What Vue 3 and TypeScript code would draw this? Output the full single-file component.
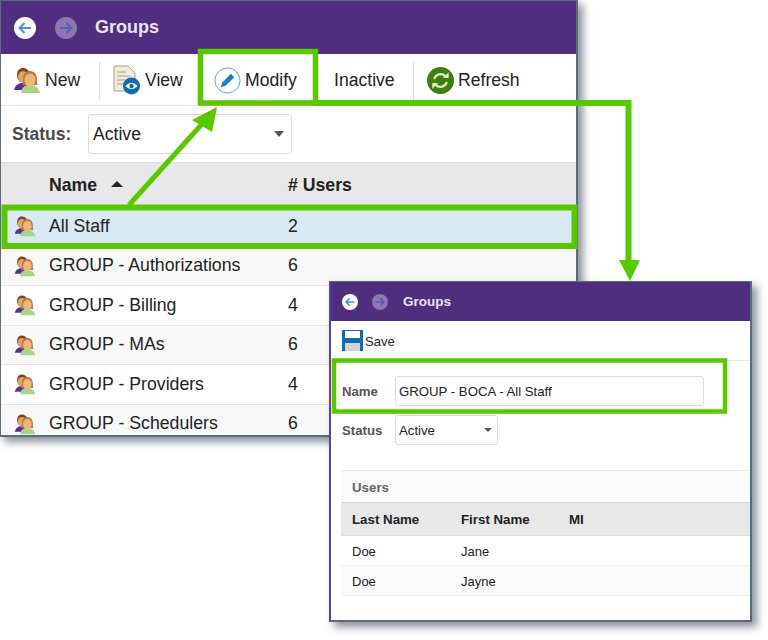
<template>
  <div class="canvas">
    <svg width="0" height="0" class="defs">
      <defs>
        <symbol id="people" viewBox="0 0 28 28">
          <path d="M1 24c1-5 5-7 8-7h5v7z" fill="#5b2d91" />
          <path d="M4 9c0-5 3-7 6-7 3 0 6 2 7 5l-3 9H8C5 15 4 12 4 9z" fill="#7a4425" />
          <ellipse cx="10" cy="11" rx="5" ry="6" fill="#e3a35c" />
          <path d="M8 27c0-5 4-8 7-8h3c4 0 8 3 9 8z" fill="#a5d58b" />
          <path d="M10 13c0-6 3-8 7-8s7 3 7 8c0 3 0 5 1 6H9c1-1 1-3 1-6z" fill="#b77a48" />
          <ellipse cx="17" cy="14" rx="5.5" ry="6.5" fill="#f0b678" />
        </symbol>
      </defs>
    </svg>

    <!-- list window -->
    <section class="win win-list">
      <header class="head head-lg">
        <span class="nav nav-back">
          <svg viewBox="0 0 22 22"><path d="M17 11H6M10.5 6 5.5 11l5 5" fill="none" stroke="#4a90d9" stroke-width="2" /></svg>
        </span>
        <span class="nav nav-next">
          <svg viewBox="0 0 22 22"><path d="M5 11h11M11.5 6l5 5-5 5" fill="none" stroke="#4f5fb5" stroke-width="2" /></svg>
        </span>
        <span class="title">Groups</span>
      </header>

      <div class="toolbar">
        <div class="tool tool-new">
          <svg class="tool-icon" width="28" height="28"><use href="#people" /></svg>New
        </div>
        <div class="tool tool-view">
          <svg class="tool-icon" width="28" height="30" viewBox="0 0 28 30">
            <path d="M1 1h14l7 7v18H1z" fill="#f1eadb" stroke="#a9a08e" />
            <path d="M4 7h9M4 11h13M4 15h9M4 19h8" stroke="#a9a08e" />
            <circle cx="18.500" cy="21" r="8.500" fill="#0f6cb0" />
            <path d="M12.500 21c3-4 9-4 12 0-3 4-9 4-12 0z" fill="#fff" />
            <circle cx="18.500" cy="21" r="2.200" fill="#0f6cb0" />
          </svg>View
        </div>
        <div class="tool tool-modify">
          <svg class="tool-icon" width="27" height="27" viewBox="0 0 28 28">
            <circle cx="14" cy="14" r="13" fill="#fff" stroke="#5ba3d8" />
            <path d="M7 21l1.500-5L17.500 7l3.500 3.500-9 9z" fill="#1a7fc4" />
          </svg>Modify
        </div>
        <div class="tool tool-inactive">Inactive</div>
        <div class="tool tool-refresh">
          <svg class="tool-icon" width="27" height="27" viewBox="0 0 28 28">
            <circle cx="14" cy="14" r="14" fill="#3f7f0c" />
            <path d="M7.500 12.500a6.800 6.800 0 0 1 11.500-3" fill="none" stroke="#dfe9d3" stroke-width="2.400" />
            <path d="M16.500 11.500h6v-6z" fill="#dfe9d3" />
            <path d="M20.500 15.500a6.800 6.800 0 0 1-11.500 3" fill="none" stroke="#dfe9d3" stroke-width="2.400" />
            <path d="M11.500 16.500h-6v6z" fill="#dfe9d3" />
          </svg>Refresh
        </div>
      </div>

      <div class="filter">
        <label class="filter-label">Status:</label>
        <div class="select select-lg">Active<span class="caret"></span></div>
      </div>

      <div class="list-head">
        <span class="col-name">Name<i class="sort"></i></span>
        <span class="col-users"># Users</span>
      </div>
      <div
        v-for="(g, i) in groups"
        :key="g.name"
        class="list-row"
        :class="{ selected: i === 0, odd: i % 2 === 1 && i !== 0 }"
      >
        <svg class="row-icon" width="22" height="22"><use href="#people" /></svg>
        <span class="col-name">{{ g.name }}</span>
        <span class="col-users">{{ g.users }}</span>
      </div>
    </section>

    <!-- edit window -->
    <section class="win win-edit">
      <header class="head head-sm">
        <span class="nav nav-back nav-sm">
          <svg viewBox="0 0 22 22"><path d="M17 11H6M10.500 6 5.500 11l5 5" fill="none" stroke="#4a90d9" stroke-width="2" /></svg>
        </span>
        <span class="nav nav-next nav-sm">
          <svg viewBox="0 0 22 22"><path d="M5 11h11M11.500 6l5 5-5 5" fill="none" stroke="#4f5fb5" stroke-width="2" /></svg>
        </span>
        <span class="title title-sm">Groups</span>
      </header>

      <div class="edit-bar">
        <svg width="21" height="21" viewBox="0 0 21 21">
          <rect width="21" height="21" fill="#0f6cb0" />
          <rect x="3" y="1" width="15" height="7" fill="#fff" />
          <rect x="3" y="13" width="15" height="8" fill="#d4d4d4" />
        </svg>
        <span class="save-label">Save</span>
      </div>

      <div class="form">
        <div class="form-row form-row-name">
          <label>Name</label>
          <div class="text-input">GROUP - BOCA - All Staff</div>
        </div>
        <div class="form-row form-row-status">
          <label>Status</label>
          <div class="select select-sm">Active<span class="caret caret-sm"></span></div>
        </div>
      </div>

      <div class="users">
        <div class="users-title">Users</div>
        <div class="users-head">
          <span class="c-last">Last Name</span><span class="c-first">First Name</span><span>MI</span>
        </div>
        <div v-for="(u, i) in users" :key="u" class="users-row" :class="{ odd: i === 1 }">
          <span class="c-last">Doe</span><span class="c-first">{{ u }}</span>
        </div>
      </div>
    </section>

    <!-- green callouts -->
    <svg class="callouts" width="768" height="640" viewBox="0 0 768 640">
      <g fill="none" stroke="#5ac800">
        <rect x="200.500" y="51.500" width="115" height="51.500" stroke-width="5.500" />
        <rect x="4.500" y="207.500" width="570" height="38.500" stroke-width="6" />
        <rect x="334" y="360.500" width="391" height="51" stroke-width="4.500" />
        <path d="M129 205 202 124" stroke-width="5" />
        <path d="M316 103H628.500V262" stroke-width="6" />
      </g>
      <path d="M217 107 192 120 212 132z" fill="#5ac800" />
      <path d="M619 260H640L630 281z" fill="#5ac800" />
    </svg>
  </div>
</template>

<script setup lang="ts">
interface Group {
  name: string
  users: number
}

const groups: Group[] = [
  { name: 'All Staff', users: 2 },
  { name: 'GROUP - Authorizations', users: 6 },
  { name: 'GROUP - Billing', users: 4 },
  { name: 'GROUP - MAs', users: 6 },
  { name: 'GROUP - Providers', users: 4 },
  { name: 'GROUP - Schedulers', users: 6 }
]

const users = ['Jane', 'Jayne']
</script>

<style>
html,
body {
  margin: 0;
  background: #fff;
}
</style>

<style scoped>
.canvas {
  position: relative;
  width: 768px;
  height: 640px;
  overflow: hidden;
  background: #fff;
  font-family: "Liberation Sans", Arial, sans-serif;
  color: #222;
}

.defs {
  position: absolute;
}

.win {
  position: absolute;
  box-sizing: border-box;
  background: #fff;
  overflow: hidden;
  border: 2px solid #5b6b7a;
  box-shadow: 5px 5px 8px rgba(60, 75, 90, 0.6);
}

.win-list {
  left: -1px;
  top: -1px;
  width: 579px;
  height: 438px;
}

.win-edit {
  left: 329px;
  top: 281px;
  width: 423px;
  height: 341px;
  border-left-color: #5b4590;
  border-top-width: 1px;
}

.head {
  display: flex;
  align-items: center;
  background: #4f2d7f;
}

.head-lg {
  height: 53px;
  padding-left: 13px;
}

.head-sm {
  height: 39px;
  padding-left: 11px;
}

.nav {
  display: flex;
  width: 22px;
  height: 22px;
  border-radius: 50%;
}

.nav svg {
  width: 100%;
  height: 100%;
}

.nav-back {
  background: #fff;
}

.nav-next {
  background: #8c78ad;
  margin-left: 19px;
}

.nav-sm {
  width: 16px;
  height: 16px;
}

.nav-sm.nav-next {
  margin-left: 14px;
}

.title {
  margin-left: 18px;
  font-size: 18px;
  font-weight: bold;
  color: #e9e4f1;
}

.title-sm {
  font-size: 13.500px;
  margin-left: 15px;
}

.toolbar {
  display: flex;
  align-items: center;
  height: 52px;
  padding-top: 1px;
  border-bottom: 1px solid #e6e6e6;
  box-sizing: border-box;
  font-size: 17.600px;
}

.tool {
  display: flex;
  align-items: center;
  height: 39px;
  box-sizing: border-box;
  gap: 4px;
}

.tool-icon {
  flex: none;
}

.tool-new {
  width: 99px;
  padding-left: 12px;
  border-right: 1px solid #d9d9d9;
}

.tool-view {
  width: 101px;
  padding-left: 13px;
}

.tool-modify {
  width: 118px;
  padding-left: 13px;
}

.tool-inactive {
  width: 95px;
  padding-left: 15px;
  border-right: 1px solid #d9d9d9;
}

.tool-refresh {
  padding-left: 13px;
}

.filter {
  display: flex;
  align-items: center;
  height: 57px;
  padding-left: 11px;
  border-bottom: 1px solid #dcdcdc;
  box-sizing: border-box;
}

.filter-label {
  width: 76px;
  font-size: 17.500px;
  font-weight: bold;
  color: #4a4a4a;
}

.select {
  position: relative;
  box-sizing: border-box;
  display: flex;
  align-items: center;
  background: #fff;
  border: 1px solid #dcdcdc;
  border-radius: 3px;
}

.select-lg {
  width: 204px;
  height: 40px;
  padding-left: 4px;
  font-size: 17.600px;
}

.select-sm {
  width: 103px;
  height: 30px;
  padding-left: 3px;
  font-size: 13.200px;
}

.caret {
  position: absolute;
  right: 7px;
  top: 16px;
  border: 5px solid transparent;
  border-top: 6px solid #555;
  border-bottom: 0;
}

.caret-sm {
  right: 5px;
  top: 12px;
  border-width: 4px 4px 0;
  border-top-color: #555;
}

.list-head {
  display: flex;
  align-items: center;
  height: 44px;
  background: #e8e8e8;
  font-size: 17.700px;
  font-weight: bold;
}

.col-name {
  display: flex;
  align-items: center;
  margin-left: 48px;
  width: 239px;
}

.sort {
  margin-left: 14px;
  margin-top: -3px;
  border: 6px solid transparent;
  border-bottom: 6px solid #222;
  border-top: 0;
}

.list-row {
  display: flex;
  align-items: center;
  height: 39.500px;
  box-sizing: border-box;
  font-size: 17.700px;
  border-bottom: 1px solid #e4e4e4;
  background: #fff;
}

.list-row.odd {
  background: #f8f8f8;
}

.list-row.selected {
  background: #d9e9f4;
}

.row-icon {
  flex: none;
  margin-left: 13px;
}

.row-icon + .col-name {
  margin-left: 13px;
}

.edit-bar {
  display: flex;
  align-items: center;
  height: 40px;
  gap: 2px;
  padding-left: 11px;
  box-sizing: border-box;
  font-size: 13px;
  border-bottom: 1px solid #e6e6e6;
}

.save-label {
  padding-top: 2px;
}

.form {
  padding: 15px 0 0 11px;
  font-size: 13.200px;
}

.form-row {
  display: flex;
  align-items: center;
}

.form-row label {
  width: 53px;
  font-weight: bold;
  color: #555;
}

.form-row-name {
  height: 30px;
}

.form-row-status {
  height: 30px;
  margin-top: 9px;
}

.text-input {
  display: flex;
  align-items: center;
  box-sizing: border-box;
  width: 309px;
  height: 30px;
  padding-left: 3px;
  border: 1px solid #dcdcdc;
  border-radius: 3px;
}

.users {
  margin: 25px 0 0 10px;
  font-size: 13px;
}

.users-title {
  display: flex;
  align-items: center;
  height: 33px;
  padding: 1px 0 0 11px;
  box-sizing: border-box;
  border-top: 1px solid #e8e8e8;
  border-bottom: 1px solid #d4d4d4;
  background: #fafafa;
  font-size: 13.300px;
  font-weight: bold;
  color: #666;
}

.users-head,
.users-row {
  display: flex;
  align-items: center;
  padding-left: 11px;
  box-sizing: border-box;
}

.users-head {
  height: 33px;
  background: #e8e8e8;
  border-bottom: 1px solid #dcdcdc;
  font-size: 13.300px;
  font-weight: bold;
}

.users-row {
  height: 30px;
  padding-top: 1px;
  border-bottom: 1px solid #eee;
}

.users-row.odd {
  background: #fafafa;
}

.c-last {
  width: 109px;
}

.c-first {
  width: 108px;
}

.callouts {
  position: absolute;
  left: 0;
  top: 0;
  pointer-events: none;
}
</style>
